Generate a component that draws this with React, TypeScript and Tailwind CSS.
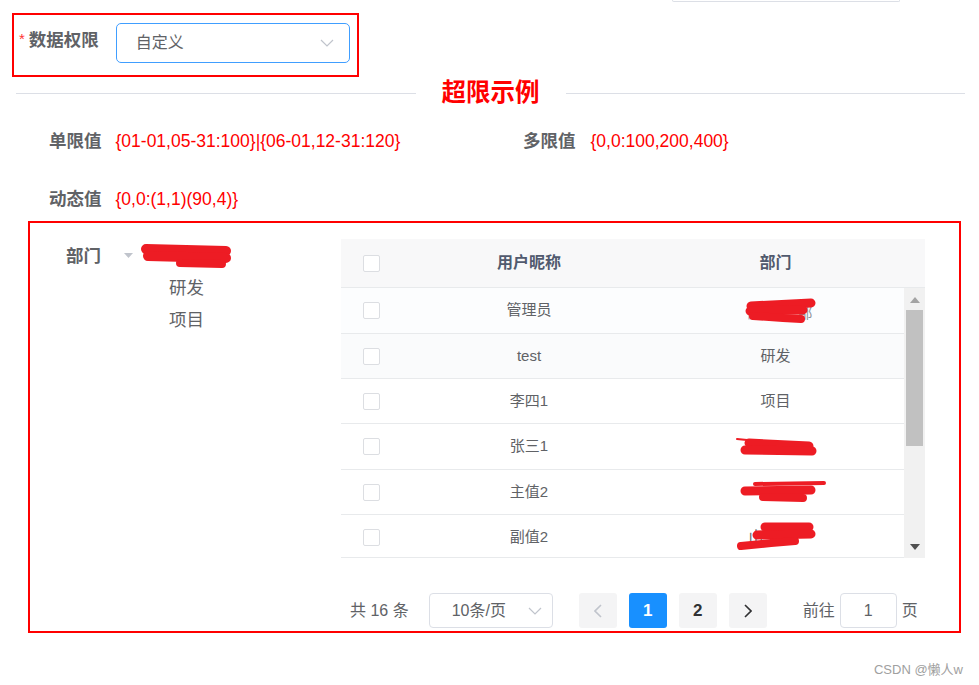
import React from "react";

type Pt = [number, number];
function Scribble({ w, h, strokes, sw = 9 }: { w: number; h: number; strokes: { pts: Pt[]; sw?: number }[]; sw?: number }) {
  return (
    <svg width={w} height={h} viewBox={`0 0 ${w} ${h}`} className="block">
      {strokes.map((s, i) => (
        <polyline
          key={i}
          points={s.pts.map((p) => p.join(",")).join(" ")}
          fill="none"
          stroke="#ed1c24"
          strokeWidth={s.sw ?? sw}
          strokeLinecap="round"
          strokeLinejoin="round"
        />
      ))}
    </svg>
  );
}

function Chevron({ color = "#c0c4cc" }: { color?: string }) {
  return (
    <svg width="14" height="8" viewBox="0 0 14 8" className="block">
      <polyline points="1,1 7,7 13,1" fill="none" stroke={color} strokeWidth="1.2" />
    </svg>
  );
}

function Checkbox() {
  return <div className="w-[17px] h-[17px] border border-[#dcdee2] rounded-[2px] bg-white" />;
}

const rows: { name: string; dept: React.ReactNode; bg: string; h: string }[] = [
  {
    name: "管理员",
    bg: "bg-[#fcfdfe]",
    h: "h-[46px]",
    dept: (
      <div className="relative w-[72px] h-[26px] ml-[10px]">
        <span className="absolute left-[2px] top-[4px] text-[15px] text-[#b0b3b8]">口</span>
        <span className="absolute right-[4px] top-[4px] text-[15px] text-[#909399]">部</span>
        <div className="absolute inset-0">
          <Scribble
            w={72}
            h={26}
            strokes={[
              { pts: [[6, 8], [66, 5]] },
              { pts: [[5, 13], [58, 12]] },
              { pts: [[8, 18], [38, 20], [56, 21]], sw: 8 },
            ]}
          />
        </div>
      </div>
    ),
  },
  { name: "test", bg: "bg-[#fafbfc]", h: "h-[45px]", dept: <span>研发</span> },
  { name: "李四1", bg: "bg-white", h: "h-[45px]", dept: <span>项目</span> },
  {
    name: "张三1",
    bg: "bg-white",
    h: "h-[46px]",
    dept: (
      <Scribble
        w={82}
        h={22}
        strokes={[
          { pts: [[2, 3], [12, 4]], sw: 2 },
          { pts: [[14, 7], [74, 10]] },
          { pts: [[10, 14], [77, 15]] },
        ]}
      />
    ),
  },
  {
    name: "主值2",
    bg: "bg-white",
    h: "h-[45px]",
    dept: (
      <div className="ml-[14px]">
        <Scribble
          w={88}
          h={24}
          strokes={[
            { pts: [[16, 4], [85, 3]], sw: 4 },
            { pts: [[6, 11], [72, 10]] },
            { pts: [[24, 17], [64, 18]], sw: 8 },
          ]}
        />
      </div>
    ),
  },
  {
    name: "副值2",
    bg: "bg-white",
    h: "h-[45px]",
    dept: (
      <div className="relative w-[86px] h-[32px] -ml-[4px]">
        <span className="absolute left-[18px] top-[5px] text-[15px] text-[#606266]">山</span>
        <div className="absolute inset-0">
          <Scribble
            w={86}
            h={32}
            strokes={[
              { pts: [[34, 6], [78, 6]] },
              { pts: [[26, 14], [80, 13]] },
              { pts: [[10, 25], [40, 22], [64, 20]], sw: 8 },
            ]}
          />
        </div>
      </div>
    ),
  },
];

export default function App() {
  return (
    <div className="relative w-[979px] h-[685px] overflow-hidden bg-white text-[#606266] font-[family-name:Liberation_Sans,Noto_Sans_CJK_SC,sans-serif]">
      <div className="ml-[672px] w-[228px] h-[2px] border-x border-b border-[#dcdfe6] rounded-b-[3px]" />

      {/* data permission box */}
      <div className="ml-[12px] mt-[11px] w-[347px] h-[64px] border-2 border-[#ff0000] flex items-start pl-[5px] pt-[8px]">
        <div className="flex items-center h-[40px] -mt-[3px]">
          <span className="text-[#f33] text-[15px] mr-[4px] leading-none -mt-[4px]">*</span>
          <span className="text-[17.5px] font-bold text-[#606266]">数据权限</span>
        </div>
        <div className="ml-[17px] w-[234px] h-[40px] border border-[#409eff] rounded-[5px] flex items-center justify-between pl-[19px] pr-[15px]">
          <span className="text-[16px] text-[#606266]">自定义</span>
          <Chevron />
        </div>
      </div>

      {/* divider */}
      <div className="ml-[16px] mt-[1px] w-[949px] h-[30px] flex items-center gap-[26px]">
        <div className="flex-1 h-px bg-[#dcdfe6]" />
        <span className="text-[24.5px] font-bold text-[#ff0000] leading-none">超限示例</span>
        <div className="flex-1 h-px bg-[#dcdfe6]" />
      </div>

      {/* values */}
      <div className="ml-[49px] mt-[18px] h-[30px] flex items-center">
        <div className="w-[474px] flex items-center">
          <span className="text-[17.5px] font-bold">单限值</span>
          <span className="ml-[14px] text-[17.5px] text-[#ff0000]">{"{01-01,05-31:100}|{06-01,12-31:120}"}</span>
        </div>
        <span className="text-[17.5px] font-bold">多限值</span>
        <span className="ml-[15px] text-[17.5px] text-[#ff0000]">{"{0,0:100,200,400}"}</span>
      </div>
      <div className="ml-[49px] mt-[28px] h-[30px] flex items-center">
        <span className="text-[17.5px] font-bold">动态值</span>
        <span className="ml-[14px] text-[17.5px] text-[#ff0000]">{"{0,0:(1,1)(90,4)}"}</span>
      </div>

      {/* department box */}
      <div className="ml-[28px] mt-[7px] w-[933px] h-[412px] border-2 border-[#ff0000] flex items-start">
        <div className="w-[311px] pt-[17px] pl-[36px] flex items-start">
          <div className="h-[32px] flex items-center">
            <span className="text-[17.5px] font-bold">部门</span>
          </div>
          <div className="ml-[23px]">
            <div className="h-[32px] flex items-center">
              <svg width="9" height="6" viewBox="0 0 9 6" className="block">
                <polygon points="0,0 9,0 4.5,5" fill="#c0c4cc" />
              </svg>
              <div className="ml-[7px]">
                <Scribble
                  w={92}
                  h={26}
                  strokes={[
                    { pts: [[6, 6], [86, 8]], sw: 10 },
                    { pts: [[8, 13], [86, 15]], sw: 10 },
                    { pts: [[40, 20], [82, 21]], sw: 8 },
                  ]}
                />
              </div>
            </div>
            <div className="h-[32px] flex items-center pl-[45px] text-[17.5px]">研发</div>
            <div className="h-[32px] flex items-center pl-[45px] text-[17.5px]">项目</div>
          </div>
        </div>

        <div className="mt-[16px] w-[584px]">
          {/* table */}
          <div className="h-[49px] bg-[#f8f8f9] border-b border-[#e8eaec] flex items-center">
            <div className="w-[70px] pl-[22px]">
              <Checkbox />
            </div>
            <div className="w-[236px] text-center text-[16px] font-bold text-[#515a6e]">用户昵称</div>
            <div className="w-[257px] text-center text-[16px] font-bold text-[#515a6e]">部门</div>
          </div>
          <div className="flex">
            <div className="w-[563px] h-[270px] overflow-hidden border-b border-[#e8eaec]">
              {rows.map((r, i) => (
                <div key={i} className={`${r.h} shrink-0 border-b border-[#e8eaec] flex items-center ${r.bg}`}>
                  <div className="w-[70px] pl-[22px]">
                    <Checkbox />
                  </div>
                  <div className="w-[236px] text-center text-[15px] text-[#606266]">{r.name}</div>
                  <div className="w-[257px] flex justify-center text-[15px] text-[#606266]">{r.dept}</div>
                </div>
              ))}
            </div>
            <div className="w-[21px] h-[270px] bg-[#f1f1f1] flex flex-col items-center">
              <svg width="10" height="6" viewBox="0 0 10 6" className="block mt-[9px]">
                <polygon points="0,6 10,6 5,0" fill="#a3a3a3" />
              </svg>
              <div className="mt-[7px] w-[17px] h-[136px] bg-[#c1c1c1]" />
              <div className="flex-1" />
              <svg width="10" height="6" viewBox="0 0 10 6" className="block mb-[8px]">
                <polygon points="0,0 10,0 5,6" fill="#505050" />
              </svg>
            </div>
          </div>

          {/* pagination */}
          <div className="mt-[35px] h-[35px] flex items-center text-[16px] text-[#606266]">
            <span className="ml-[9px]">共 16 条</span>
            <div className="ml-[20px] w-[124px] h-[35px] border border-[#dcdfe6] rounded-[4px] flex items-center justify-between pl-[22px] pr-[10px]">
              <span>10条/页</span>
              <Chevron />
            </div>
            <div className="ml-[26px] flex gap-[12px]">
              <div className="w-[38px] h-[35px] rounded-[3px] bg-[#f4f4f5] flex items-center justify-center">
                <svg width="8" height="14" viewBox="0 0 8 14" className="block">
                  <polyline points="7,1 1,7 7,13" fill="none" stroke="#c0c4cc" strokeWidth="1.6" />
                </svg>
              </div>
              <div className="w-[38px] h-[35px] rounded-[3px] bg-[#1890ff] flex items-center justify-center text-white font-bold text-[17px]">1</div>
              <div className="w-[38px] h-[35px] rounded-[3px] bg-[#f4f4f5] flex items-center justify-center text-[#303133] font-bold text-[17px]">2</div>
              <div className="w-[38px] h-[35px] rounded-[3px] bg-[#f4f4f5] flex items-center justify-center">
                <svg width="8" height="14" viewBox="0 0 8 14" className="block">
                  <polyline points="1,1 7,7 1,13" fill="none" stroke="#303133" strokeWidth="1.6" />
                </svg>
              </div>
            </div>
            <span className="ml-[36px]">前往</span>
            <div className="ml-[5px] w-[57px] h-[35px] border border-[#dcdfe6] rounded-[4px] flex items-center justify-center">1</div>
            <span className="ml-[5px]">页</span>
          </div>
        </div>
      </div>

      <div className="mt-[27px] pr-[16px] flex justify-end text-[13px] text-[#a0a0a0]">CSDN @懒人w</div>
    </div>
  );
}
